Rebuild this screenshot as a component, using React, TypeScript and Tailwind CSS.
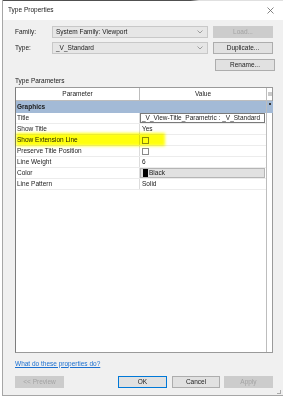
import React from "react";

const font = { fontFamily: '"Segoe UI", "Liberation Sans", Arial, sans-serif' };

function Combo({ text }: { text: string }) {
  return (
    <div className="w-[156px] h-[12px] bg-[#e6e6e6] border border-[#c8c8c8] flex items-center justify-between pl-[3px] pr-[4px]">
      <span>{text}</span>
      <svg width="6" height="4" viewBox="0 0 6 4">
        <path d="M0.5 0.5 L3 3 L5.5 0.5" fill="none" stroke="#8a8a8a" strokeWidth="0.8" />
      </svg>
    </div>
  );
}

function Btn({ text, disabled, primary, w = "w-[60px]" }: { text: string; disabled?: boolean; primary?: boolean; w?: string }) {
  return (
    <div
      className={
        "h-[12px] flex items-center justify-center " +
        w +
        " " +
        (disabled
          ? "bg-[#cccccc] border border-[#cccccc] text-[#a3a3a3]"
          : primary
          ? "bg-[#e1e1e1] border border-[#0078d7] text-[#222]"
          : "bg-[#e1e1e1] border border-[#adadad] text-[#222]")
      }
    >
      {text}
    </div>
  );
}

function Row({ name, children }: { name: string; children?: React.ReactNode }) {
  return (
    <div className="flex h-[11px] border-b border-[#ececec]">
      <div className="w-[124px] pl-[1px] flex items-center border-r border-[#dcdcdc] text-[#222]">{name}</div>
      <div className="w-[126px] flex items-center">{children}</div>
    </div>
  );
}

export default function App() {
  return (
    <div className="w-[283px] h-[400px] bg-white overflow-hidden text-[6.5px] leading-none text-[#1a1a1a]" style={font}>
      <div className="ml-[2px] w-[281px] h-[396px] border-l border-b border-[#a6a6a6] bg-[#f0f0f0] flex flex-col relative">
        <div className="h-[1px] bg-[linear-gradient(to_right,#505050_0%,#505050_67%,#e0e0e0_70%,#e0e0e0_100%)]" />
        <div className="h-[19px] bg-white flex items-center justify-between pl-[5px] pr-[9px]">
          <span className="text-[#222]">Type Properties</span>
          <svg width="7" height="7" viewBox="0 0 7 7">
            <path d="M0.5 0.5 L6.5 6.5 M6.5 0.5 L0.5 6.5" stroke="#666" strokeWidth="0.8" />
          </svg>
        </div>
        <div className="flex-1 flex flex-col pl-[12px] pr-[8px] pt-[6px]">
          <div className="flex items-center">
            <div className="w-[37px]">Family:</div>
            <Combo text="System Family: Viewport" />
            <div className="ml-[5px]">
              <Btn text="Load..." disabled />
            </div>
          </div>
          <div className="flex items-center mt-[4px]">
            <div className="w-[37px]">Type:</div>
            <Combo text="_V_Standard" />
            <div className="ml-[5px]">
              <Btn text="Duplicate..." />
            </div>
          </div>
          <div className="flex justify-end mt-[5px]">
            <Btn text="Rename..." />
          </div>
          <div className="mt-[5px] h-[10px] flex items-center">Type Parameters</div>
          <div className="mt-[1px] w-[258px] h-[266px] bg-white border border-[#9a9a9a] border-l-[#7d7d7d] flex relative">
            <div className="w-[250px] flex flex-col">
              <div className="flex h-[13px] border-b border-[#bdbdbd]">
                <div className="w-[124px] flex items-center justify-center border-r border-[#bdbdbd]">Parameter</div>
                <div className="w-[126px] flex items-center justify-center">Value</div>
              </div>
              <div className="h-[12px] bg-[#a3bad6] flex items-center pl-[1px] font-bold text-[#1a1a1a] w-[257px]">Graphics</div>
              <Row name="Title">
                <div className="w-[125px] h-[10px] border border-[#7a7a7a] bg-white flex items-center pl-[1px]">
                  _V_View-Title_Parametric : _V_Standard
                </div>
              </Row>
              <Row name="Show Title">
                <span className="pl-[2px]">Yes</span>
              </Row>
              <Row name="Show Extension Line">
                <div className="ml-[2px] w-[7px] h-[7px] border border-[#8a8a8a] bg-white" />
              </Row>
              <Row name="Preserve Title Position">
                <div className="ml-[2px] w-[7px] h-[7px] border border-[#8a8a8a] bg-white" />
              </Row>
              <Row name="Line Weight">
                <span className="pl-[2px]">6</span>
              </Row>
              <Row name="Color">
                <div className="w-[125px] h-[10px] bg-[#e1e1e1] border border-[#b5b5b5] flex items-center pl-[2px] gap-[1px]">
                  <div className="w-[5px] h-[8px] bg-black" />
                  <span>Black</span>
                </div>
              </Row>
              <Row name="Line Pattern">
                <span className="pl-[2px]">Solid</span>
              </Row>
            </div>
            <div className="w-[7px] border-l border-[#bdbdbd] flex flex-col">
              <div className="h-[13px] border-b border-[#bdbdbd] flex items-center justify-center text-[#555]">
                <svg width="4" height="4" viewBox="0 0 4 4">
                  <path d="M0 1 H4 M0 3 H4" stroke="#666" strokeWidth="0.7" />
                </svg>
              </div>
              <div className="h-[12px] bg-[#a3bad6] flex items-start justify-center pt-[2px]">
                <div className="w-[2px] h-[2px] bg-[#333]" />
              </div>
            </div>
            <div className="absolute left-0 top-[45px] w-[149px] h-[13px] bg-[#ffff00] mix-blend-multiply blur-[1.5px] opacity-95" />
          </div>
          <div className="mt-[7px] h-[8px] flex items-center">
            <span className="text-[#1a6fd0] underline">What do these properties do?</span>
          </div>
          <div className="mt-[8px] flex items-center">
            <Btn text="<< Preview" disabled w="w-[49px]" />
            <div className="ml-[54px]">
              <Btn text="OK" primary w="w-[49px]" />
            </div>
            <div className="ml-[5px]">
              <Btn text="Cancel" w="w-[48px]" />
            </div>
            <div className="ml-[4px]">
              <Btn text="Apply" disabled w="w-[49px]" />
            </div>
          </div>
        </div>
        <div className="absolute right-[2px] bottom-[1px] w-[4px] h-[4px] border-r border-b border-[#aaa]" />
      </div>
    </div>
  );
}
